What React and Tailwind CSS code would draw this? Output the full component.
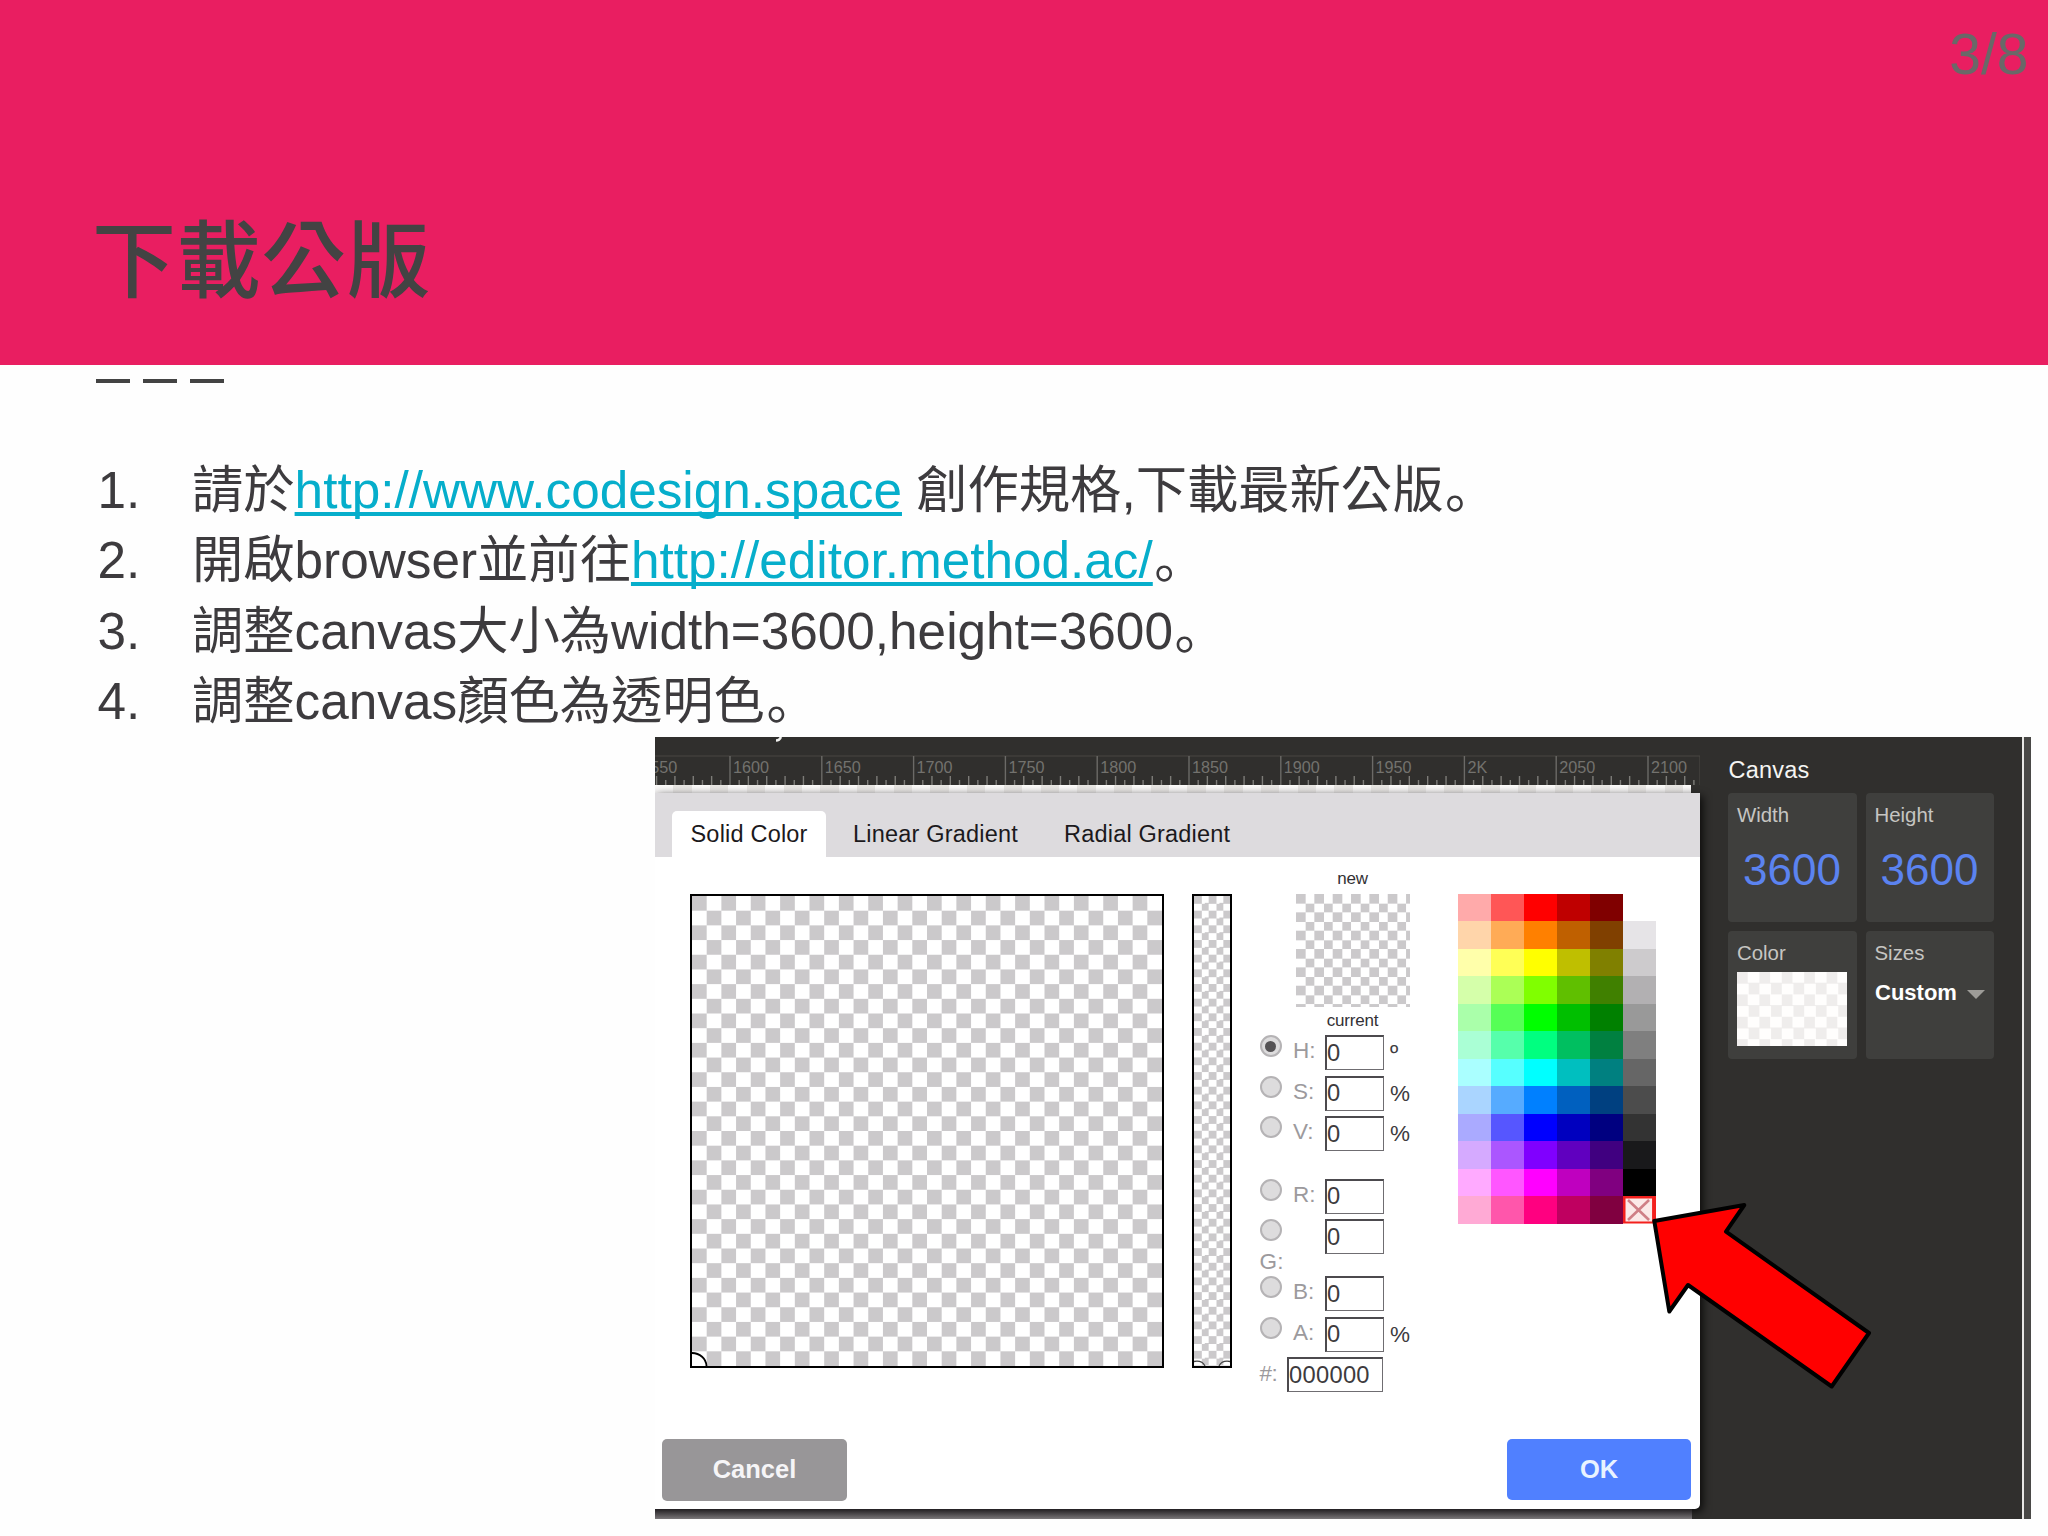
import React from "react";

const hues = [
  [255, 0, 0],
  [255, 128, 0],
  [255, 255, 0],
  [128, 255, 0],
  [0, 255, 0],
  [0, 255, 128],
  [0, 255, 255],
  [0, 128, 255],
  [0, 0, 255],
  [128, 0, 255],
  [255, 0, 255],
  [255, 0, 128],
];

const grays = ["#fff", "#e6e4e7", "#cdcbcd", "#b2b0b2", "#999", "#7f7f7f", "#666", "#4c4c4c", "#333", "#19191b", "#000"];

const tint = (c, t) => `rgb(${c.map((v) => Math.round(v + (255 - v) * t)).join(",")})`;
const shade = (c, s) => `rgb(${c.map((v) => Math.round(v * s)).join(",")})`;

const rulerLabels = ["1550", "1600", "1650", "1700", "1750", "1800", "1850", "1900", "1950", "2K", "2050", "2100"];

function Ruler() {
  const step = 91.8;
  const start = 75 - step;
  const ticks = [];
  for (let i = 0; i < 118; i++) {
    const x = start + (i * step) / 10;
    if (x < 0 || x > 1043) continue;
    const y = i % 10 === 0 ? 19 : i % 2 === 0 ? 39 : 43;
    ticks.push(<path key={i} d={`M${x} ${y}V48`} stroke={i % 10 === 0 ? "#6b6a67" : "#7d7c78"} strokeWidth="1.4" />);
  }
  return (
    <svg className="block h-[48px] w-[1045px]" viewBox="0 0 1045 48">
      <path d="M0 19H1045V48" fill="none" stroke="#484743" strokeWidth="1.2" />
      {ticks}
      {rulerLabels.map((l, i) => (
        <text key={l} x={start + i * step + 3} y="35.5" fontSize="16.2" fill="#73726e">
          {l}
        </text>
      ))}
      <path d="M121 3.5Q124.500 3.500 126 0" fill="none" stroke="#f2f2f0" strokeWidth="2.500" />
    </svg>
  );
}

function Radio({ on }) {
  return (
    <span className="flex size-[22px] shrink-0 items-center justify-center rounded-full border-2 border-[#b5b3b5] bg-[#dddcdd]">
      {on && <span className="size-[11px] rounded-full bg-[#555355]" />}
    </span>
  );
}

const inputClass =
  "block h-[35px] border-t-2 border-l-2 border-r border-b border-t-[#4c4a4e] border-l-[#4c4a4e] border-r-[#6f6d71] border-b-[#6f6d71] bg-white pt-px text-[23.7px] text-[#3d3b3e] outline-none";

function Field({ label, unit, on, wrap, className }) {
  return (
    <div className={`flex items-start ${className}`}>
      <div className="flex w-[65.500px] flex-wrap content-start">
        <Radio on={on} />
        <span
          className={
            wrap
              ? "mt-[9px] w-full text-[22.5px] leading-[24px] tracking-[0.3px] text-[#9c9a9d]"
              : "mt-[4px] ml-[11.500px] text-[22.5px] leading-[24px] text-[#9c9a9d]"
          }
        >
          {label}:
        </span>
      </div>
      <input readOnly value="0" className={`${inputClass} w-[59px]`} />
      {unit && <span className="ml-[6px] text-[22.5px] leading-[36px] text-[#3d3b3e]">{unit}</span>}
    </div>
  );
}

function Palette() {
  return (
    <div className="mt-[25.500px] grid h-[330px] w-[198.500px] grid-cols-6 grid-rows-12">
      {hues.map((c, r) => (
        <React.Fragment key={r}>
          {[tint(c, 0.667), tint(c, 0.337), tint(c, 0), shade(c, 0.75), shade(c, 0.5)].map((color, i) => (
            <span key={i} style={{ backgroundColor: color }} />
          ))}
          {r < 11 ? (
            <span style={{ backgroundColor: grays[r] }} />
          ) : (
            <svg viewBox="0 0 33 27.500" preserveAspectRatio="none" className="size-full">
              <rect width="33" height="27.500" fill="#f3201d" />
              <rect x="2.500" y="2.500" width="26.500" height="23" fill="#fbe9e8" />
              <path d="M5 4L26 24M26 4L5 24" stroke="#cf7f86" strokeWidth="2.600" />
            </svg>
          )}
        </React.Fragment>
      ))}
    </div>
  );
}

function ColorDialog() {
  return (
    <div className="h-[716px] w-[1045px] rounded-br-[5px] bg-white shadow-[3px_3px_9px_rgba(0,0,0,0.75)]">
      <div className="flex h-[64px] items-end bg-[#dddbde] pl-[17px] text-[23.5px] tracking-[0.2px] text-[#1b191c]">
        <span className="h-[46px] w-[154px] rounded-t-[5px] bg-white pl-[18.500px] leading-[47px]">Solid Color</span>
        <span className="h-[46px] pl-[27px] leading-[47px]">Linear Gradient</span>
        <span className="h-[46px] pl-[46px] leading-[47px]">Radial Gradient</span>
      </div>

      <div className="flex h-[581px] pt-[11px] pl-[35px]">
        <div className="mt-[26px] h-[474px] w-[474px] border-2 border-black bg-[conic-gradient(#fff_25%,#cbc9cb_0_50%,#fff_0_75%,#cbc9cb_0)] bg-[length:29.38px_29.38px]">
          <svg viewBox="0 0 470 470" className="block h-[470px] w-[470px]">
            <path d="M0 457A14.500 13.500 0 0 1 14.500 470" fill="none" stroke="#000" strokeWidth="1.800" />
          </svg>
        </div>
        <div className="mt-[26px] ml-[28px] h-[474px] w-[40px] border-2 border-black bg-[conic-gradient(#fff_25%,#cbc9cb_0_50%,#fff_0_75%,#cbc9cb_0)] bg-[length:14.68px_14.68px]">
          <svg viewBox="0 0 36 470" className="block h-[470px] w-[36px]">
            <path d="M0 465.500Q8 464 11 470M36 465.500Q28 464 25 470" fill="none" stroke="#444" strokeWidth="1.300" />
          </svg>
        </div>

        <div className="ml-[27.500px] w-[160px]">
          <div className="ml-[36.500px] w-[113px] text-center text-[17px] leading-[20px] tracking-[-0.2px] text-[#333135]">
            <div className="pt-px">new</div>
            <div className="mt-[4.500px] h-[113.500px] w-[114px] bg-[conic-gradient(#fff_25%,#cbc9cb_0_50%,#fff_0_75%,#cbc9cb_0)] bg-[length:18.35px_18.35px]" />
            <div className="mt-[4px]">current</div>
          </div>
          <Field label="H" unit="º" on className="mt-[4px] h-[40.500px]" />
          <Field label="S" unit="%" className="h-[40.500px]" />
          <Field label="V" unit="%" className="h-[62.500px]" />
          <Field label="R" className="h-[40.500px]" />
          <Field label="G" wrap className="h-[57px]" />
          <Field label="B" className="h-[40.500px]" />
          <Field label="A" unit="%" className="h-[40.500px]" />
          <div className="flex">
            <span className="mt-[5px] w-[27.500px] text-[22.5px] leading-[24px] tracking-[-0.5px] text-[#9c9a9d]">#:</span>
            <input readOnly value="000000" className={`${inputClass} w-[96px] tracking-[0.300px]`} />
          </div>
        </div>

        <div className="ml-[38.500px]">
          <Palette />
        </div>
      </div>

      <div className="flex justify-between pt-px pr-[9px] pl-[7px] text-[25.5px] font-bold">
        <button className="h-[62px] w-[185px] rounded-[5px] bg-[#989698] pb-px text-[#f6f5f7]">Cancel</button>
        <button className="h-[61px] w-[184px] rounded-[5px] bg-[#5080ff] text-[#e9f3ff]">OK</button>
      </div>
    </div>
  );
}

function Card({ label, children }) {
  return (
    <div className="h-[128.500px] rounded-[4px] bg-[#3f3f3d] px-[9px] pt-[10px] text-[20.4px] leading-[24px] text-[#c6c5c2]">
      <div>{label}</div>
      {children}
    </div>
  );
}

function CanvasPanel() {
  return (
    <aside className="h-[782px] w-[322px] pt-[20px] pl-[28px]">
      <h2 className="h-[36px] pl-[0.500px] text-[23.5px] leading-[26px] tracking-[0.2px] text-[#f5f5f3]">Canvas</h2>
      <div className="grid w-[266px] grid-cols-2 gap-x-[9px] gap-y-[9px]">
        <Card label="Width">
          <div className="mt-[18px] pl-[6px] text-[44px] leading-[50px] text-[#5b83f0]">3600</div>
        </Card>
        <Card label="Height">
          <div className="mt-[18px] pl-[6px] text-[44px] leading-[50px] text-[#5b83f0]">3600</div>
        </Card>
        <Card label="Color">
          <div className="mt-[7.500px] h-[74px] w-[110px] bg-[conic-gradient(#fffefd_25%,#efedec_0_50%,#fffefd_0_75%,#efedec_0)] bg-[length:22.4px_22.4px]" />
        </Card>
        <Card label="Sizes">
          <div className="mt-[16px] flex items-center justify-between pl-[0.500px] text-[22px] font-bold text-white">
            Custom
            <svg viewBox="0 0 18 9" className="mt-[4px] h-[9px] w-[18px]">
              <path d="M0 0H18L9 9Z" fill="#9d9c98" />
            </svg>
          </div>
        </Card>
      </div>
    </aside>
  );
}

function EditorFigure() {
  return (
    <figure className="relative mt-[2px] ml-[655px] flex h-[782px] w-[1376px] overflow-hidden bg-[#302f2d]">
      <div className="relative z-10 h-[782px] w-[1045px]">
        <Ruler />
        <div className="h-[8px] w-[1036px] bg-[linear-gradient(180deg,transparent,rgba(221,219,222,0.5)),repeating-linear-gradient(90deg,#fdfcfa_0_18.36px,#e8e6e2_18.36px_36.72px)]" />
        <ColorDialog />
        <div className="h-[10px] w-[1037px] bg-linear-to-b from-[#221f22] to-[#7b787a]" />
      </div>
      <CanvasPanel />
      <div className="h-[782px] w-[9px] border-l-2 border-l-[#e8e7e5] bg-[#494846]" />
    </figure>
  );
}

function Arrow() {
  return (
    <svg className="absolute top-[1195px] left-[1645px] z-20 h-[200px] w-[235px]" viewBox="1645 1195 235 200">
      <path
        d="M1654.300 1221L1744.300 1205L1726 1231.700L1869 1333L1831.700 1386.500L1688 1285L1669.300 1311.500Z"
        fill="#f00"
        stroke="#000"
        strokeWidth="4"
        strokeLinejoin="round"
      />
    </svg>
  );
}

const Stop = () => <span className="pl-[1.500px] font-['Noto_Sans_CJK_JP',sans-serif]">。</span>;
const linkClass = "text-[#06aecb] underline decoration-[3.500px] underline-offset-[4px] [text-decoration-skip-ink:none]";

export default function App() {
  const steps = [
    <>
      請於
      <a className={linkClass}>http://www.codesign.space</a> 創作規格,下載最新公版
      <Stop />
    </>,
    <>
      開啟browser並前往
      <a className={linkClass}>http://editor.method.ac/</a>
      <Stop />
    </>,
    <>
      調整canvas大小為width=3600,height=3600
      <Stop />
    </>,
    <>
      調整canvas顏色為透明色
      <Stop />
    </>,
  ];
  return (
    <main className="relative h-[1536px] w-[2048px] overflow-hidden bg-[#fefefe] font-['Liberation_Sans','Noto_Sans_CJK_TC',sans-serif]">
      <header className="flex h-[365px] flex-col bg-[#e91e61]">
        <div className="h-[220px] pt-[23px] pr-[19.500px] text-right text-[57px] leading-[62px] text-[#6a6868]">3/8</div>
        <h1 className="pl-[92px] text-[84px] leading-[84px] font-medium tracking-[0.8px] text-[#434343]">下載公版</h1>
      </header>
      <div className="flex h-[86px] gap-[13px] pt-[13.500px] pl-[96px]">
        <span className="h-[4.500px] w-[34px] bg-[#434343]" />
        <span className="h-[4.500px] w-[34px] bg-[#434343]" />
        <span className="h-[4.500px] w-[34px] bg-[#434343]" />
      </div>
      <ol className="h-[284px] text-[51.3px] leading-[70.4px] text-[#3d3b3e]">
        {steps.map((s, i) => (
          <li key={i} className="flex h-[70.4px] items-baseline pl-[97.500px] whitespace-nowrap">
            <span className="w-[94.500px]">{i + 1}.</span>
            <span>{s}</span>
          </li>
        ))}
      </ol>
      <EditorFigure />
      <Arrow />
    </main>
  );
}
